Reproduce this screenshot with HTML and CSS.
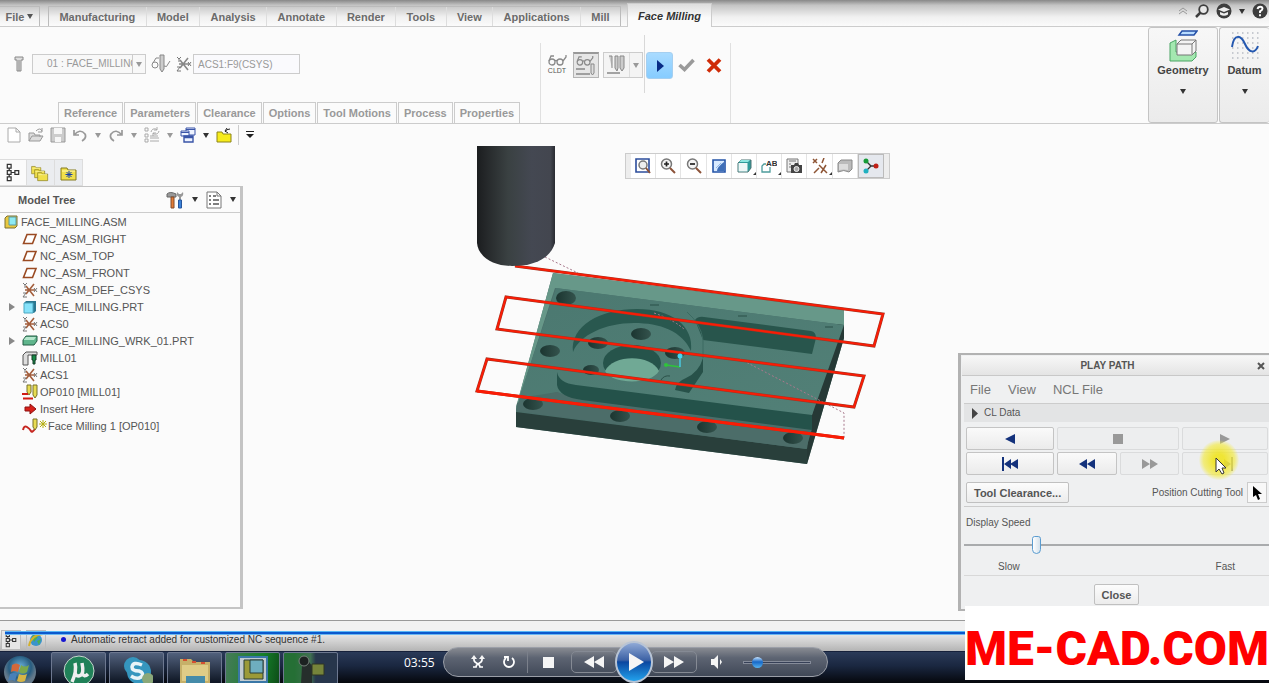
FILE: index.html
```html
<!DOCTYPE html>
<html lang="en">
<head>
<meta charset="utf-8">
<title>Face Milling - Play Path</title>
<link rel="stylesheet" href="styles.css">
</head>
<body>
<svg class="defs" aria-hidden="true">
  <symbol id="down" viewBox="0 0 6 5"><path d="M0 0h6L3 5z" fill="currentColor"/></symbol>
  <symbol id="plane" viewBox="0 0 16 12"><path d="M5 1.500h9L10.500 10.500h-9z" fill="#fff" stroke="#9a4a22" stroke-width="1.600"/></symbol>
  <symbol id="csys" viewBox="0 0 16 16"><g stroke="currentColor" fill="none"><path d="M4 4l8 10M12 2L4 12M3 8h10" stroke-width="1.600"/><path d="M1 1l2 2 2-2M3 3v3M1 11h3l-3 4h4M12 6l3 4M15 6l-3 4" stroke="#777"/></g></symbol>
  <symbol id="tree" viewBox="0 0 14 20"><g fill="none" stroke="#333" stroke-width="1.300"><path d="M1 1.500h4v4H1zM1 8h4v4H1zM9 8h4v4H9zM1 14.500h4v4H1zM3 5.500V8m0 4v2.500M5 10h4"/></g></symbol>
  <symbol id="folder" viewBox="0 0 18 16"><path d="M1 3h6l1 2h8v10H1z" fill="#f0e04a" stroke="#857a1e"/><path d="M2 6h13" stroke="#fff9b0"/></symbol>
  <symbol id="glasses" viewBox="0 0 20 12"><g fill="none" stroke="#8a8a8a" stroke-width="1.300"><circle cx="5" cy="8" r="3"/><circle cx="13" cy="8" r="3"/><path d="M8 7q1-1 2 0M2 7L4 2h3M16 7l3-4V1"/></g></symbol>
</svg>

<div class="app">
  <header class="tabbar">
    <button class="file-tab">File <svg class="arrow"><use href="#down"/></svg></button>
    <nav class="tabs">
      <button>Manufacturing</button><button>Model</button><button>Analysis</button><button>Annotate</button><button>Render</button><button>Tools</button><button>View</button><button>Applications</button><button>Mill</button>
    </nav>
    <button class="active-tab">Face Milling</button>
    <div class="help-icons">
      <button aria-label="Collapse ribbon"><svg width="10" height="8" viewBox="0 0 10 8"><path d="M1 4l4-3 4 3M1 7l4-3 4 3" fill="none" stroke="#999"/></svg></button>
      <button aria-label="Search"><svg width="14" height="14" viewBox="0 0 14 14"><circle cx="8.500" cy="5.500" r="4.300" fill="#e8e8e8" stroke="#3d3d3d" stroke-width="1.800"/><path d="M5.500 8.500L1 13" stroke="#3d3d3d" stroke-width="2.500"/></svg></button>
      <button aria-label="Learning"><svg width="16" height="16" viewBox="0 0 16 16"><circle cx="8" cy="8" r="7.500" fill="#3d3d3d"/><path d="M2 6.500L8 4l6 2.500L8 9zM4 9v2.500q4 2.500 8 0V9L8 10.500z" fill="#eee"/></svg></button>
      <button aria-label="Learning options"><svg class="arrow dark"><use href="#down"/></svg></button>
      <button aria-label="Help"><svg width="16" height="16" viewBox="0 0 16 16"><circle cx="8" cy="8" r="7.500" fill="#3d3d3d"/><path d="M5.500 6Q6 3.700 8.200 3.700q2.300 0 2.300 2Q10.500 7 8 8.300V10m0 1.300v1.900" fill="none" stroke="#fff" stroke-width="1.900"/></svg></button>
    </div>
  </header>

  <section class="ribbon">
    <div class="setup">
      <div class="setup-row">
        <svg class="tool-icon" viewBox="0 0 10 16"><path d="M1 1h8v3H7v11H3V4H1zM5 4v11" fill="#ddd" stroke="#888"/></svg>
        <div class="tool-select"><select aria-label="Tool"><option>01 : FACE_MILLING</option></select><svg class="arrow"><use href="#down"/></svg></div>
        <svg width="20" height="20" viewBox="0 0 20 20"><g stroke="#888" fill="none"><circle cx="4" cy="11" r="3"/><path d="M2 9l3-5h3M13 12q3 2 4-2l2-3"/><path d="M9 1h4v14l-2 3-2-3z" fill="#ccc"/></g></svg>
        <svg class="csys pale"><use href="#csys"/></svg>
        <input class="csys-field" aria-label="Coordinate system" value="ACS1:F9(CSYS)">
      </div>
      <nav class="panels"><button>Reference</button><button>Parameters</button><button>Clearance</button><button>Options</button><button>Tool Motions</button><button>Process</button><button>Properties</button></nav>
    </div>
    <div class="actions">
      <button class="cldt" aria-label="CL data"><svg width="20" height="12"><use href="#glasses"/></svg><span>CLDT</span></button>
      <button class="boxed pressed" aria-label="Screen play"><svg width="22" height="22" viewBox="0 0 22 22"><use href="#glasses" width="19" height="11"/><path d="M1 14h9M1 19h14" stroke="#888" stroke-width="1.500"/><path d="M16 9h3v9l-1.500 2-1.500-2z" fill="#ddd" stroke="#888"/></svg></button>
      <div class="split">
        <button aria-label="Material removal"><svg width="20" height="22" viewBox="0 0 20 22"><path d="M2 2h3v12M8 2h3v12l-1 3-2-3zM13 2h4v12l-2 3-2-3z" fill="#ccc" stroke="#888"/><path d="M0 19h13" stroke="#888" stroke-width="1.500"/></svg></button>
        <button class="split-arrow" aria-label="More simulation modes"><svg class="arrow"><use href="#down"/></svg></button>
      </div>
      <button class="resume" aria-label="Resume"><svg width="8" height="14"><path d="M1 1l7 6-7 6z" fill="#082b86"/></svg></button>
      <button class="plain" aria-label="Accept"><svg width="17" height="14" viewBox="0 0 17 14"><path d="M1.500 7l5 4.500L15.500 2" fill="none" stroke="#9a9a9a" stroke-width="3.600"/></svg></button>
      <button class="plain" aria-label="Cancel"><svg width="16" height="15" viewBox="0 0 16 15"><path d="M2 1.500l12 12M14 1.500l-12 12" stroke="#cf2c08" stroke-width="3.800"/></svg></button>
    </div>
    <div class="groups">
      <button><svg width="30" height="32" viewBox="0 0 30 32"><path d="M14 1h15l-3 4H11z" fill="#b8dcff" stroke="#2450a8" stroke-width="1.500"/><path d="M2 13l6-3v12h20v5l-4 4H2z" fill="#a4e8b0" stroke="#4aa465"/><path d="M9 14l4-4h15v11l-4 4H9zM9 14h15v10M24 14l4-4" fill="#f4f4f4" stroke="#777"/></svg>Geometry<svg class="arrow dark"><use href="#down"/></svg></button>
      <button><svg width="30" height="32" viewBox="0 0 30 32"><path d="M2 3h27M2 8h27M2 13h27M2 18h27M2 23h27M2 28h27" stroke="#b8bcc4" stroke-width="1.500" stroke-dasharray="1.500 3.500"/><path d="M2 17C4 3 11 5 15 14s10 10 13 2" fill="none" stroke="#2458b0" stroke-width="2"/></svg>Datum<svg class="arrow dark"><use href="#down"/></svg></button>
    </div>
  </section>

  <div class="quickbar">
    <button aria-label="New"><svg viewBox="0 0 16 16"><path d="M2 1h8l4 4v10H2zM10 1v4h4" fill="#fff" stroke="#aaa"/></svg></button>
    <button aria-label="Open"><svg viewBox="0 0 16 16"><path d="M1 14V6h5l1 2h5v2M1 14l3-5h11l-3 5z" fill="#ddd" stroke="#999"/><path d="M8 4q4-4 6 0M14 1v4h-4" fill="none" stroke="#999"/></svg></button>
    <button aria-label="Save"><svg viewBox="0 0 16 16"><path d="M1 1h14v14H1z" fill="#ccc" stroke="#999"/><path d="M4 1h8v6H4zM5 10h6v5H5z" fill="#f6f6f6"/></svg></button>
    <button aria-label="Undo"><svg viewBox="0 0 16 16"><path d="M2 3v5h5M2 8q6-7 11-1 2 4-3 7" fill="none" stroke="#999" stroke-width="1.700"/></svg></button>
    <button class="narrow" aria-label="Undo list"><svg class="arrow"><use href="#down"/></svg></button>
    <button aria-label="Redo"><svg viewBox="0 0 16 16"><path d="M14 3v5H9M14 8Q8 1 3 7q-2 4 3 7" fill="none" stroke="#999" stroke-width="1.700"/></svg></button>
    <button class="narrow" aria-label="Redo list"><svg class="arrow"><use href="#down"/></svg></button>
    <button aria-label="Regenerate"><svg viewBox="0 0 16 16"><path d="M1 1h3v3H1zM1 7h3v3H1zM1 12h3v3H1zM6 9h8M6 11h9M6 14h9M7 5q1-4 5-3l1 1M15 4q-1 4-5 3l-1-1M13 0v3h-3M9 9V6h3" fill="none" stroke="#aaa"/></svg></button>
    <button class="narrow" aria-label="Regenerate options"><svg class="arrow"><use href="#down"/></svg></button>
    <button aria-label="Windows"><svg viewBox="0 0 16 16"><g fill="#eef3ff" stroke="#3a55a8"><path d="M6 1h9v7H6zM6 2.500h9"/><path d="M1 4h8v5H1zM1 5.500h8" /><path d="M4 9h9v6H4zM4 10.500h9" stroke-width="1.400"/></g></svg></button>
    <button class="narrow" aria-label="Window list"><svg class="arrow dark"><use href="#down"/></svg></button>
    <button aria-label="Close window"><svg viewBox="0 0 16 16"><path d="M1 5h5l1 2h8v8H1z" fill="#f7ec1c" stroke="#8c8418"/><path d="M9 5q1-3 5-3M11 1L9 4l3 2" fill="none" stroke="#222"/></svg></button>
    <button class="narrow customize" aria-label="Customize toolbar"><svg width="8" height="8" viewBox="0 0 8 8"><path d="M0 0h8v1H0zM0 3h8L4 7z" fill="#222"/></svg></button>
  </div>

  <main class="workspace">
    <aside class="sidebar">
      <div class="side-tabs">
        <button class="on" aria-label="Model tree"><svg width="14" height="19"><use href="#tree"/></svg></button>
        <button aria-label="Folder browser"><svg width="19" height="18" viewBox="0 0 19 18"><use href="#folder" width="11" height="11"/><use href="#folder" x="3" y="3" width="12" height="12"/><use href="#folder" x="6" y="6" width="12" height="12"/></svg></button>
        <button aria-label="Favorites"><svg width="18" height="16" viewBox="0 0 18 16"><use href="#folder" width="18" height="16"/><path d="M9 6v7M5.500 9.500h7M6.500 7l5 5M11.500 7l-5 5" stroke="#1540b0"/></svg></button>
      </div>
      <div class="side-panel">
        <div class="side-head"><h2>Model Tree</h2>
          <button aria-label="Tree settings"><svg width="18" height="18" viewBox="0 0 18 18"><path d="M1 3q3-3 9 0v3H1z" fill="#999" stroke="#666"/><path d="M5 6h3v11H5z" fill="#e27b35" stroke="#7e4b2d"/><path d="M11 1q-1 4 2 5v3h2V6q3-1 2-5l-2 2-2 0z" fill="#999"/><path d="M12.500 9h3v8h-3z" fill="#3b82d8" stroke="#26559b"/></svg></button>
          <svg class="arrow dark"><use href="#down"/></svg>
          <button aria-label="Show"><svg width="16" height="18" viewBox="0 0 16 18"><path d="M1 1h10l4 4v12H1zM11 1v4h4" fill="#fff" stroke="#777"/><path d="M3 5h2M3 9h2M3 13h2M7 5h3M7 9h6M7 13h6" stroke="#555" stroke-width="1.500"/></svg></button>
          <svg class="arrow dark"><use href="#down"/></svg>
        </div>
        <ul class="tree">
          <li class="root"><svg viewBox="0 0 16 16"><path d="M2 4l2-2h10v10l-2 2H2z" fill="#e8c840" stroke="#7d7033"/><path d="M6 3h7v8H6z" fill="#8eeaf2" stroke="#5d999e"/></svg>FACE_MILLING.ASM</li>
          <li><svg><use href="#plane"/></svg>NC_ASM_RIGHT</li>
          <li><svg><use href="#plane"/></svg>NC_ASM_TOP</li>
          <li><svg><use href="#plane"/></svg>NC_ASM_FRONT</li>
          <li><svg class="brown"><use href="#csys"/></svg>NC_ASM_DEF_CSYS</li>
          <li class="parent"><svg viewBox="0 0 16 16"><path d="M2 4l2-2h10v10l-2 2H2z" fill="#2b7790"/><path d="M2 4h9v10H2z" fill="#85e2fa" stroke="#4aa6c0"/></svg>FACE_MILLING.PRT</li>
          <li><svg class="brown"><use href="#csys"/></svg>ACS0</li>
          <li class="parent"><svg viewBox="0 0 16 16"><path d="M1 7l3-4h11v5l-3 4H1z" fill="#5fb58c" stroke="#245d45"/><path d="M1.500 7L4 4h10l-2 3z" fill="#b5e6cd"/></svg>FACE_MILLING_WRK_01.PRT</li>
          <li><svg viewBox="0 0 16 16"><path d="M1 15V5l3-3h11v3H6v10z" fill="#ddd" stroke="#555"/><path d="M10 5h4v5h-1v4h-2v-4h-1z" fill="#168a45" stroke="#173b28"/></svg>MILL01</li>
          <li><svg class="brown"><use href="#csys"/></svg>ACS1</li>
          <li><svg viewBox="0 0 16 16"><path d="M5 1h4v7l-2 3-2-3zM11 1h4v10l-2 3-2-3z" fill="#e8dc52" stroke="#77702a"/><path d="M0 10h6M1 14.500h10" stroke="#d01c14" stroke-width="2"/></svg>OP010 [MILL01]</li>
          <li><svg viewBox="0 0 16 16"><path d="M3 6h5V3l6 5-6 5v-3H3z" fill="#d8201a" stroke="#8e1010"/></svg>Insert Here</li>
          <li><svg class="wide" viewBox="0 0 25 16"><path d="M1 12q1-5 4-3t4 4 4-2" fill="none" stroke="#c62620" stroke-width="2"/><path d="M11 1h4v8l-2 3-2-3z" fill="#e8dc52" stroke="#77702a"/><path d="M21 2v8M17 6h8M18 3l6 6M24 3l-6 6" stroke="#b5ad10"/></svg>Face Milling 1 [OP010]</li>
        </ul>
      </div>
    </aside>

    <section class="viewport" aria-label="Graphics area">
      <svg class="scene" viewBox="470 146 420 330">
        <defs>
          <linearGradient id="cyl"><stop offset="0" stop-color="#1b1d1f"/><stop offset=".12" stop-color="#25282a"/><stop offset=".4" stop-color="#3a4142"/><stop offset=".7" stop-color="#444852"/><stop offset=".94" stop-color="#43464f"/><stop offset="1" stop-color="#292b31"/></linearGradient>
          <linearGradient id="hole"><stop offset="0" stop-color="#1b3530"/><stop offset="1" stop-color="#34534d"/></linearGradient>
          <linearGradient id="face" x2="1" y2="1"><stop offset="0" stop-color="#4b7870"/><stop offset="1" stop-color="#528077"/></linearGradient>
        </defs>
        <path d="M516 408L553 273 844 310V338L807 464 516 427z" fill="#4a6e69"/>
        <path d="M516 412L807 449V464L516 427z" fill="#293f3b"/>
        <path d="M837 322L844 310V338L807 464V449L812 415z" fill="#263936"/>
        <path d="M553 273L844 310V325L555 288 520 396 516 411V407z" fill="#679889"/>
        <path d="M519 398L556 288 844 325 812 415 575 400 557 392z" fill="url(#face)"/>
        <path d="M517 403L557 392 577 399 812 429 806 449 516 411z" fill="#4c6d69"/>
        <path d="M557 372Q559 383 576 385L812 415V430L582 400Q559 397 557 385z" fill="#24524a"/>
        <path d="M573 352C570 326 600 309 637 309C672 309 694 326 691 351C682 331 660 323 634 323C605 323 580 335 573 352z" fill="#29584f"/>
        <path d="M695 320Q698 316 704 317L811 331Q816 332 816 338L812 354 703 340z" fill="#28554c"/>
        <path d="M703 358V372L689 393 675 390Q676 382 686 378 699 372 703 358z" fill="#275149"/>
        <path d="M687 312q14 12 16 28v18" fill="none" stroke="#3c6b62"/>
        <g fill="url(#hole)">
          <ellipse cx="566" cy="298" rx="10" ry="7"/><ellipse cx="641" cy="334" rx="10" ry="6"/><ellipse cx="598" cy="343" rx="10" ry="6"/><ellipse cx="550" cy="351" rx="10" ry="6"/><ellipse cx="591" cy="370" rx="8" ry="5"/><ellipse cx="675" cy="353" rx="10" ry="6"/><ellipse cx="533" cy="404" rx="10" ry="6"/><ellipse cx="620" cy="416" rx="10" ry="6"/><ellipse cx="707" cy="427" rx="10" ry="6"/><ellipse cx="793" cy="438" rx="10" ry="6"/>
        </g>
        <ellipse cx="632" cy="363" rx="29" ry="18" fill="#26544b"/>
        <path d="M605 371C613 354 651 354 659 371C651 385 613 385 605 371z" fill="#70a995"/>
        <path d="M661 380q3-5 9-4M650 305h9M738 316h9M825 327h8" fill="none" stroke="#2b5149"/>
        <path d="M545 257L578 273M654 313q18 6 30 16M740 359L844 413V438" fill="none" stroke="#a8788c" stroke-dasharray="2 2"/>
        <path d="M515 266L883 314 874 346 506 297 497 329 864 376 854 407 487 359 477 391 844 438" fill="none" stroke="#9f3524" stroke-width="3"/>
        <path d="M515 266L883 314 874 346 506 297 497 329 864 376 854 407 487 359 477 391 844 438" fill="none" stroke="#fa1c05" stroke-width="2"/>
        <path d="M477 391L844 438" stroke="#fa1c05" stroke-width="3"/>
        <path d="M477 146H555V243C550 259 534 266 512 266C492 266 478 256 477 243z" fill="url(#cyl)"/>
        <path d="M666 365l14 2" stroke="#2fc43a" stroke-width="1.500"/><circle cx="666" cy="365" r="2" fill="#2fc43a"/><path d="M680 367v-10" stroke="#48c8e0" stroke-width="1.500"/><circle cx="680" cy="356" r="2.500" fill="#48d4f0"/>
      </svg>
      <div class="viewbar">
        <button aria-label="Refit"><svg viewBox="0 0 16 16"><path d="M1 1h13v13H1z" fill="#fff" stroke="#2c4d9c" stroke-width="1.600"/><circle cx="8" cy="7" r="4" fill="#eee" stroke="#777" stroke-width="1.500"/><path d="M11 10l4 5" stroke="#8c5238" stroke-width="2"/></svg></button>
        <button aria-label="Zoom in"><svg viewBox="0 0 16 16"><circle cx="6.500" cy="6" r="5" fill="#f4f4f4" stroke="#777" stroke-width="1.500"/><path d="M4 6h5M6.500 3.500v5" stroke="#222" stroke-width="1.700"/><path d="M10 10l5 5" stroke="#8c5238" stroke-width="2"/></svg></button>
        <button aria-label="Zoom out"><svg viewBox="0 0 16 16"><circle cx="6.500" cy="6" r="5" fill="#f4f4f4" stroke="#777" stroke-width="1.500"/><path d="M4 6h5" stroke="#222" stroke-width="1.700"/><path d="M10 10l5 5" stroke="#8c5238" stroke-width="2"/></svg></button>
        <button aria-label="Repaint"><svg viewBox="0 0 16 16"><path d="M2 2h12v12H2z" fill="#d8eaff" stroke="#2454a8" stroke-width="1.600"/><path d="M6 13q0-4 7-9v9z" fill="#3f6fb8"/><path d="M5 10l5-5" stroke="#8fb6e6"/></svg></button>
        <button class="more" aria-label="Display style"><svg viewBox="0 0 16 16"><path d="M2 5l3-3h10v8l-3 4H2z" fill="#2f9a9a" stroke="#4c7373"/><path d="M2.500 5h9v8.500h-9z" fill="#eef7f7"/><path d="M3 4l2-2h9l-2 2z" fill="#8de5df"/></svg></button>
        <button class="more" aria-label="Saved orientations"><svg viewBox="0 0 16 16"><path d="M5 6H3L1 8v6h8V9" fill="none" stroke="#4e9c9c" stroke-width="1.300"/><text x="5" y="8" class="ab">AB</text></svg></button>
        <button aria-label="View manager"><svg viewBox="0 0 16 16"><path d="M1 1h11v13H1zM3 3h7M3 6h2M3 9h2" fill="#eee" stroke="#777"/><path d="M5 7h3l1-2h3l1 2h3v8H5z" fill="#444"/><circle cx="10.500" cy="11" r="2.500" fill="#aaa" stroke="#eee"/></svg></button>
        <button class="more" aria-label="Datum display"><svg viewBox="0 0 16 16"><path d="M1 1l4 4M5 1L1 5M12 0l-2 5M2 15l5-5M7 7l8 8M14 7l-5 8" stroke="#8e5535" stroke-width="1.500"/></svg></button>
        <button aria-label="Annotation display"><svg viewBox="0 0 16 16"><path d="M1 5l3-3h11v9l-3 3q-5-3-11 0z" fill="#bbb" stroke="#888"/><path d="M2 6h9v6q-4-1-9 0z" fill="#ddd"/></svg></button>
        <button class="selected" aria-label="Spin center"><svg viewBox="0 0 16 16"><path d="M3 3l5 5h5M8 8l-5 5" stroke="#333" fill="none" stroke-width="1.300"/><circle cx="3" cy="3" r="2.500" fill="#179b37"/><circle cx="13" cy="8" r="2.500" fill="#c02016"/><circle cx="3" cy="13" r="2.500" fill="#20b0c0"/></svg></button>
      </div>
    </section>
  </main>

  <footer class="status">
    <button class="pressed" aria-label="Toggle navigator"><svg width="12" height="16"><use href="#tree"/></svg></button>
    <button aria-label="Toggle browser"><svg width="16" height="16" viewBox="0 0 16 16"><circle cx="8" cy="8" r="6" fill="#3a94cc"/><path d="M4 4q3-2 6 1L6 10zM9 9l4-2-2 6z" fill="#4caf50"/><path d="M1 14Q3 3 15 2" fill="none" stroke="#d4b028" stroke-width="2"/></svg></button>
    <p>Automatic retract added for customized NC sequence #1.</p>
  </footer>

  <div class="taskbar">
    <button class="start" aria-label="Start"><svg width="36" height="32" viewBox="0 0 36 32"><defs><radialGradient id="orb" cy=".35"><stop offset="0" stop-color="#6cb4df"/><stop offset=".7" stop-color="#285d80"/><stop offset="1" stop-color="#64798a"/></radialGradient></defs><circle cx="18" cy="19" r="16" fill="url(#orb)"/><path d="M10 12q4-3 8 0l-2 7q-4-2-7 0z" fill="#d2683a"/><path d="M19 12q4 3 8 0l-2 7q-4 3-8 0z" fill="#7ba84a"/><path d="M8 21q4-2 7 0l-2 7q-3-2-7 0z" fill="#4880b8"/><path d="M17 21q4 2 8 0l-2 7q-4 2-8 0z" fill="#d6b545"/></svg></button>
    <button aria-label="Torrent client"><svg width="32" height="30" viewBox="0 0 32 30"><circle cx="16" cy="17" r="15" fill="#208158" stroke="#c6d6ce"/><path d="M9 28Q14 17 12 9M12 18q1 6 6 3 3-2 1-12M19 19q2 5 6 1" fill="none" stroke="#eee" stroke-width="3.500"/></svg></button>
    <button aria-label="Messenger"><svg width="32" height="30" viewBox="0 0 32 30"><circle cx="12" cy="12" r="9" fill="#3596be"/><circle cx="18" cy="18" r="12" fill="#3596be"/><path d="M21 11q-9-4-10 2 0 4 7 4 6 2 2 6-4 3-10-1" fill="none" stroke="#e8f4f8" stroke-width="3.500"/><circle cx="27" cy="25" r="6" fill="#8ba879"/></svg></button>
    <button aria-label="File explorer"><svg width="34" height="30" viewBox="0 0 34 30"><path d="M2 5h11l3 3h16v22H2z" fill="#c6b069"/><path d="M4 11h26v16H4z" fill="#dfcc87"/><path d="M5 6h4M14 8h4M23 9h4" stroke="#d44f30" stroke-width="2"/><path d="M8 22h19v8H8z" fill="#458ba9"/></svg></button>
    <button class="green" aria-label="CAD application"><svg width="32" height="30" viewBox="0 0 32 30"><path d="M2 3h28v25H2z" fill="#c1cbd0" stroke="#3a77a7" stroke-width="2"/><path d="M7 6h19v19H7z" fill="#9b9a38" stroke="#293e38"/><path d="M13 6h13v13H13z" fill="#6eaebf" stroke="#293e38"/></svg></button>
    <button class="green half" aria-label="Screen recorder"><svg width="32" height="30" viewBox="0 0 32 30"><path d="M7 12l5-7 5 7v18H6z" fill="#262e2c"/><circle cx="9" cy="7" r="5" fill="#1c2221" stroke="#77827c"/><path d="M17 10h12v11H17z" fill="#76843b" stroke="#2e3525"/></svg></button>
  </div>

  <section class="dialog" aria-labelledby="dialog-title">
    <div class="dialog-title"><h2 id="dialog-title">PLAY PATH</h2><button aria-label="Close window"><svg width="8" height="8" viewBox="0 0 8 8"><path d="M1 1l6 6M7 1L1 7" stroke="#555" stroke-width="2"/></svg></button></div>
    <nav class="dialog-menu"><button>File</button><button>View</button><button>NCL File</button></nav>
    <button class="cl-data"><svg width="6" height="11"><path d="M0 0l6 5.500L0 11z" fill="#444"/></svg>CL Data</button>
    <div class="playback">
      <button class="third" aria-label="Play backward"><svg width="10" height="10"><path d="M10 0v10L0 5z"/></svg></button>
      <button class="two off" aria-label="Stop"><svg width="10" height="10"><path d="M0 0h10v10H0z"/></svg></button>
      <button class="third off" aria-label="Play forward"><svg width="10" height="10"><path d="M0 0v10l10-5z"/></svg></button>
      <button class="third" aria-label="Go to beginning"><svg width="16" height="14" viewBox="0 0 16 14"><path d="M0 0h2v14H0zM9 2v10L2 7zM16 2v10L8 7z"/></svg></button>
      <button aria-label="Rewind"><svg width="16" height="10"><path d="M8 0v10L0 5zM16 0v10L8 5z"/></svg></button>
      <button class="off" aria-label="Fast forward"><svg width="16" height="10"><path d="M0 0v10l8-5zM8 0v10l8-5z"/></svg></button>
      <button class="third off" aria-label="Go to end"><svg width="16" height="14" viewBox="0 0 16 14"><path d="M14 0h2v14h-2zM0 2v10l7-5zM7 2v10l7-5z"/></svg></button>
    </div>
    <div class="clearance"><button class="push">Tool Clearance...</button><label for="pick">Position Cutting Tool</label><button id="pick" class="pick"><svg width="10" height="14" viewBox="0 0 10 14"><path d="M1 0v11l3-2 2 5 2-1-2-5h4z"/></svg></button></div>
    <div class="speed"><label for="speed">Display Speed</label><input id="speed" type="range" value="23"><div class="ends"><span>Slow</span><span>Fast</span></div></div>
    <div class="dialog-foot"><button class="push">Close</button></div>
    <div class="glow"><svg width="12" height="18" viewBox="0 0 12 18"><path d="M1 1v14l3-3 3 5 2-1-2-5h4z" fill="#fff" stroke="#333"/></svg></div>
  </section>

  <div class="progress"></div>
  <div class="player">
    <time>03:55</time>
    <div class="pill">
      <button aria-label="Shuffle"><svg width="14" height="14" viewBox="0 0 14 14"><path d="M3 2v3q0 2 4 4 2 1 2 3h3M11 2v3q0 2-4 4-2 1-2 3H2" fill="none" stroke="#fff" stroke-width="1.700"/><path d="M0 4l3-4 3 4zM8 4l3-4 3 4z"/></svg></button>
      <button aria-label="Repeat"><svg width="14" height="14" viewBox="0 0 14 14"><path d="M4 3a5 5 0 1 0 6 0M2 2h4v4" fill="none" stroke="#fff" stroke-width="1.800"/></svg></button>
      <button class="stop" aria-label="Stop"><svg width="11" height="11"><path d="M0 0h11v11H0z"/></svg></button>
      <button class="skip" aria-label="Previous"><svg width="20" height="12"><path d="M10 0v12L0 6zM20 0v12L10 6z"/></svg></button>
      <button class="play" aria-label="Play"><svg width="16" height="18"><path d="M1 0v18l15-9z"/></svg></button>
      <button class="skip" aria-label="Next"><svg width="20" height="12"><path d="M0 0v12l10-6zM10 0v12l10-6z"/></svg></button>
      <button class="mute" aria-label="Mute"><svg width="13" height="14" viewBox="0 0 13 14"><path d="M1 4h3l4-4v14l-4-4H1zM10 4l2 3-2 3z"/></svg></button>
      <input type="range" aria-label="Volume" value="16">
    </div>
  </div>
  <div class="brand">ME-CAD.COM</div>
</div>
</body>
</html>
```

FILE: styles.css
```css
* { box-sizing: border-box; }
body { margin: 0; background: #fbfbfb; color: #555; font: 11px/16px "Liberation Sans", Arial, sans-serif; }
button { margin: 0; padding: 0; border: 0; background: none; color: inherit; font: inherit; display: flex; align-items: center; justify-content: center; flex: none; }
svg { flex: none; display: block; }
h2, p, ul { margin: 0; padding: 0; font-size: 11px; }
.defs { position: absolute; width: 0; height: 0; }
.arrow { width: 6px; height: 5px; color: #999; }
.arrow.dark { color: #333; }

.app { position: relative; display: flex; flex-direction: column; min-height: 100vh; overflow: hidden; }

.tabbar { display: flex; align-items: flex-end; height: 27px; border-bottom: 1px solid #ccc; background: linear-gradient(#888, #c4c4c4 20%, #f0f0f0 65%, #fbfbfb); font-weight: bold; color: #6b6b6b; }
.file-tab { gap: 3px; width: 40px; height: 20px; border: 1px solid #bbb; border-width: 1px 1px 0 0; }
.file-tab .arrow { color: #555; }
.tabs { display: flex; width: 573px; margin-left: 8px; border: 1px solid #bbb; border-width: 1px 1px 0; }
.tabs button { flex: 1 1 auto; height: 19px; padding: 0 8px; border-right: 1px solid #ddd; }
.tabs button:last-child { border-right: 0; }
.active-tab { height: 24px; margin: 0 0 -1px 6px; padding: 0 10px; border: 1px solid #ccc; border-bottom: 0; background: linear-gradient(#ddd, #fbfbfb 60%); font-style: italic; color: #333; }
.help-icons { display: flex; align-items: center; gap: 7px; height: 16px; margin: 0 1px 7px auto; }

.ribbon { display: flex; min-height: 97px; border-bottom: 1px solid #ccc; }
.setup { display: flex; flex-direction: column; width: 540px; }
.setup-row { display: flex; align-items: center; height: 20px; margin: 27px 0 auto 14px; gap: 5px; color: #999; font-size: 10px; }
.tool-icon { width: 10px; height: 16px; margin-right: 3px; }
.tool-select { display: flex; align-items: center; width: 114px; height: 20px; border: 1px solid #ccc; background: #f8f8f8; }
.tool-select select { appearance: none; width: 100px; height: 18px; padding: 0 0 0 14px; border: 0; border-right: 1px solid #ccc; background: none; color: inherit; font: inherit; }
.tool-select .arrow { margin: auto; }
.csys { width: 16px; height: 16px; }
.pale { color: #888; margin-right: -4px; }
.csys-field { width: 107px; height: 20px; border: 1px solid #ccc; background: #fafafd; padding: 0 4px; color: inherit; font: inherit; }
.panels { display: flex; gap: 1px; margin-left: 58px; color: #999; font-weight: bold; }
.panels button { height: 21px; padding: 0 5px; border: 1px solid #ccc; border-bottom: 0; }
.actions { display: flex; align-items: flex-start; width: 191px; margin-top: 16px; padding: 9px 0 0 6px; border: 1px solid #e0e0e0; border-width: 0 1px; }
.cldt { flex-direction: column; width: 20px; margin-right: 6px; font-size: 7px; line-height: 9px; padding-top: 2px; }
.boxed { width: 26px; height: 26px; border: 1px solid #ccc; }
.pressed { background: #e6e6e6; border: 1px solid #b4b4b4; border-top: 2px solid #999; }
.split { display: flex; margin: 0 3px 0 4px; border: 1px solid #ccc; background: #f4f4f4; }
.split button { width: 25px; height: 24px; }
.split .split-arrow { width: 13px; border-left: 1px solid #ddd; }
.resume { position: relative; width: 27px; height: 27px; border: 1px solid #a5cff0; border-radius: 3px; background: linear-gradient(#a9dbff, #86ccff); }
.resume::before { content: ""; position: absolute; left: -3px; top: -18px; width: 1px; height: 58px; background: #d8d8d8; }
.plain { width: 27px; height: 26px; }
.groups { display: flex; margin-left: auto; gap: 1px; font-weight: bold; }
.groups button { flex-direction: column; justify-content: flex-start; width: 70px; padding-top: 2px; border: 1px solid #c4c4c4; border-radius: 3px; background: linear-gradient(#f7f7f7, #ebebeb); color: #444; }
.groups button + button { width: 50px; border-right: 0; }
.groups .arrow { margin-top: 11px; }

.quickbar { display: flex; align-items: center; height: 22px; padding-left: 6px; gap: 6px; }
.quickbar button > svg:not([width]):not(.arrow) { width: 16px; height: 16px; }
.quickbar .narrow { width: 7px; }
.quickbar .narrow + button { margin-left: 1px; }
.quickbar .customize { width: 18px; height: 20px; padding-left: 5px; border-left: 1px solid #ccc; }

.workspace { display: flex; flex: 1; }
.sidebar { display: flex; flex-direction: column; width: 243px; padding: 13px 0 11px; }
.side-tabs { display: flex; height: 27px; }
.side-tabs button { width: 28px; border: 1px solid #ddd; border-left: 0; background: #ebedf0; }
.side-tabs .on { width: 27px; background: none; }
.side-panel { flex: 1; border: solid #c4c4c4; border-width: 1px 3px 2px 0; }
.side-head { display: flex; align-items: center; height: 26px; padding: 0 4px 0 18px; border-bottom: 1px solid #ccc; gap: 8px; }
.side-head h2 { margin-right: auto; }
.tree { list-style: none; }
.tree li { display: flex; align-items: center; gap: 2px; height: 17px; padding-left: 22px; position: relative; white-space: nowrap; }
.tree .root { padding-left: 3px; }
.tree svg { width: 16px; height: 16px; }
.tree .wide { width: 25px; margin-right: -1px; }
.tree .parent::before { content: ""; position: absolute; left: 9px; border: solid transparent; border-width: 4px 0 4px 6px; border-left-color: #888; }
.brown { color: #a35e3c; }

.viewport { position: relative; flex: 1; overflow: hidden; }
.scene { position: absolute; left: 227px; top: 0; width: 420px; height: 330px; }
.viewbar { position: absolute; left: 382px; top: 7px; display: flex; width: 265px; padding: 0 5px; border: 1px solid #ccc; background: #ededed; }
.viewbar button { position: relative; flex: 1; height: 24px; border-right: 1px solid #e4e4e4; background: #fff; }
.viewbar svg { width: 16px; height: 16px; }
.viewbar .selected { background: #e5e8ee; border: 1px solid #bbb; }
.viewbar .more::after { content: ""; position: absolute; right: 0; bottom: 3px; border: solid transparent; border-width: 3px 0 0 3px; border-bottom: 0; border-right: 3px solid #333; }
.ab { font: bold 8px "Liberation Sans", sans-serif; fill: #333; }

.status { display: flex; align-items: center; height: 31px; padding: 7px 0 0 1px; gap: 5px; border-top: 1px solid #999; background: linear-gradient(#f1f1f1 35%, #ddd 55%, #b4b4b4); color: #333; font-size: 10px; }
.status button { width: 20px; height: 20px; border: 1px solid #bbb; }
.status p { display: flex; align-items: center; gap: 5px; font-size: 10px; margin-left: 10px; }
.status p::before { content: ""; width: 5px; height: 5px; border-radius: 50%; background: #1616d0; }
.progress { position: absolute; left: 5px; right: 0; bottom: 48px; height: 4px; background: linear-gradient(#58b6f5 25%, #0b58cd 25%, #0b58cd 75%, #6ab8f2 75%); }
.taskbar { display: flex; align-items: flex-start; gap: 3px; height: 32px; overflow: hidden; border-top: 1px solid #15203a; background: linear-gradient(#2a3a58, #1a2740 45%, #05070c); }
.taskbar button { width: 55px; height: 34px; border: 1px solid #6d7890; border-radius: 2px; background: linear-gradient(#51607c, #101826 90%); }
.taskbar .start { width: 48px; border: 0; background: none; padding-right: 8px; }
.taskbar .green { background: linear-gradient(100deg, #467b59, #167f29 65%, #0d4c18); }
.taskbar .half { background: linear-gradient(90deg, #256f35 20%, #3f6f51 50%, #27364c 60%); }

.dialog { position: absolute; right: 0; top: 353px; width: 311px; padding: 3px 0 4px 3px; border: solid #b2b2b2; border-width: 2px 0 2px 3px; background: #eff0f1; font-size: 10px; }
.dialog-title { display: flex; align-items: center; height: 20px; margin: -2px 0 0 -2px; padding-right: 4px; border-bottom: 1px solid #c8c8c8; background: linear-gradient(#f7f7f7, #e4e4e4); }
.dialog-title h2 { flex: 1; padding-right: 4px; text-align: center; font-size: 10px; }
.dialog-menu { display: flex; gap: 17px; height: 27px; padding: 1px 6px 0; font-size: 13px; color: #777; }
.cl-data { width: 100%; height: 19px; justify-content: flex-start; gap: 6px; padding-left: 8px; border-top: 1px solid #ccc; background: #e3e4e5; }
.playback { display: grid; grid-template-columns: 88px 60px 59px 1fr; gap: 2px 3px; padding: 5px 1px 0 2px; }
.playback button { height: 23px; border: 1px solid #c4c4c4; border-radius: 2px; background: linear-gradient(#fafafa, #ebebeb); fill: #14327c; }
.playback .two { grid-column: span 2; }
.playback .off { border-color: #dadbdc; background: #edeeef; fill: #999; }
.clearance { display: flex; align-items: center; height: 32px; padding: 4px 2px 0; border-bottom: 1px solid #ccc; }
.clearance label { margin: 0 4px 0 auto; }
.push { height: 21px; padding: 0 7px; border: 1px solid #c0c0c0; border-radius: 2px; background: linear-gradient(#fcfcfc, #ececec); font-size: 11px; font-weight: bold; }
.pick { width: 20px; height: 21px; border: 1px solid #ccc; background: #f8f8f8; }
.speed { padding-top: 8px; border-bottom: 1px solid #d8d8d8; }
.speed label { display: block; padding-left: 2px; }
input[type="range"] { appearance: none; display: block; margin: 0; background: none; }
.speed input { width: 100%; height: 28px; }
input[type="range"]::-webkit-slider-runnable-track { height: 2px; background: #a9abad; }
.speed input::-webkit-slider-thumb { appearance: none; width: 9px; height: 18px; margin-top: -8px; border: 1px solid #5a9cd0; border-radius: 3px 3px 5px 5px; background: linear-gradient(90deg, #fff, #d5e2ec); }
.ends { display: flex; justify-content: space-between; padding: 0 34px; }
.dialog-foot { display: flex; justify-content: center; padding-top: 8px; }
.glow { position: absolute; left: 238px; top: 85px; width: 40px; height: 40px; padding: 17px 0 0 16px; border-radius: 50%; background: radial-gradient(#f0e41ce0 20%, #f3ea3aa0 55%, #f5ee5000 72%); }

.player { position: absolute; left: 404px; bottom: 6px; display: flex; align-items: center; gap: 8px; color: #fff; font: 12px "Open Sans", sans-serif; }
.pill { display: flex; align-items: center; width: 385px; height: 30px; padding: 0 17px 0 27px; border: 1px solid #9b9fa8; border-radius: 15px; background: linear-gradient(#888b92, #5d6472 35%, #404857); fill: #f5f5f5; }
.pill button { height: 22px; margin-right: 17px; }
.pill .stop { padding-left: 15px; margin-left: -6px; border-left: 1px solid #7b808b; }
.pill .skip { width: 46px; margin: 0; border: 1px solid #858a94; border-radius: 5px; }
.pill .play { width: 38px; height: 42px; margin: 0 -2px; padding-left: 5px; border: 2px solid #b8c4d5; border-radius: 50%; background: linear-gradient(#8fa9d6, #3d62a5 45%, #0b47a0 50%, #22a2ed); z-index: 1; }
.pill .mute { margin: 0 20px 0 13px; }
.pill input { width: 68px; height: 16px; }
.pill input::-webkit-slider-runnable-track { height: 3px; border: 1px solid #858b99; background: #364057; }
.pill input::-webkit-slider-thumb { appearance: none; width: 11px; height: 11px; margin-top: -5px; border-radius: 50%; background: linear-gradient(#cae5ff, #1668c7 45%, #58b3f0); }
.brand { position: absolute; right: 0; bottom: 3px; display: flex; align-items: center; justify-content: center; width: 304px; height: 74px; padding-top: 11px; background: #fff; color: #f00; font: 900 48px/60px Roboto, "Liberation Sans", sans-serif; white-space: nowrap; }
```
